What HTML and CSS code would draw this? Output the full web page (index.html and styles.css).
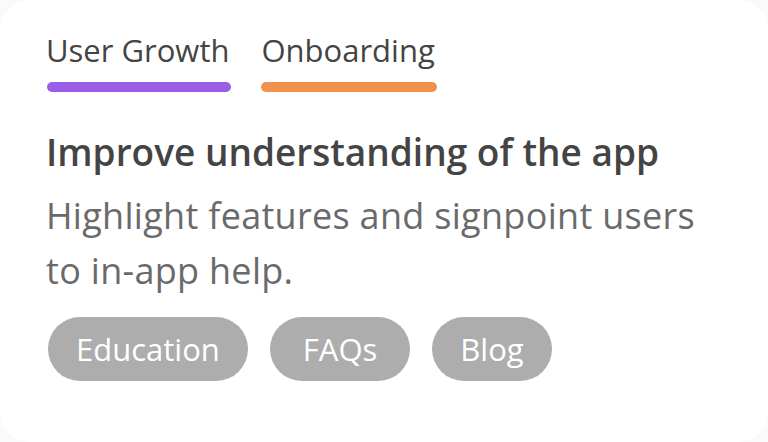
FILE: index.html
```html
<!doctype html>
<html lang="en">
<head>
<meta charset="utf-8">
<title>Improve understanding of the app</title>
<meta name="viewport" content="width=device-width, initial-scale=1">
<link rel="stylesheet" href="styles.css">
</head>
<body>

<div class="card">
  <!-- goal tags -->
  <div class="tags">
    <div class="tag tag-growth">User Growth</div>
    <div class="tag tag-onboard">Onboarding</div>
  </div>

  <h1>Improve understanding of the app</h1>
  <p class="desc">Highlight features and signpoint users to in-app help.</p>

  <ul class="chips">
    <li>Education</li>
    <li class="faq">FAQs</li>
    <li class="blog">Blog</li>
  </ul>
</div>

</body>
</html>
```

FILE: styles.css
```css
:root{
  --c-bg:#fafafa;
  --c-card:#fff;
  --c-text:#444;
  --c-sub:#6a6a6a;
  --c-chip:#adadad;
  --c-purple:#9b5de5;
  --c-orange:#f2914b;
}
*{box-sizing:border-box;margin:0;padding:0;}
html,body{height:100%;}
body{font-family:"Open Sans","Noto Sans",Arial,sans-serif;background:var(--c-bg);color:var(--c-text);}
.card{
    height:100%;
    background:var(--c-card);
    border-radius:30px;
    padding:29px 46px;
}
.tags{display:flex;gap:32px;}
.tag{font-size:31px;line-height:42px;}
.tag::after{
    content:"";
    display:block;
    height:10px;
    border-radius:5px;
    margin:11px -2px 0 1px;
    background:var(--c-purple);
}
.tag-onboard::after{background:var(--c-orange);margin-left:0;}
h1{font-size:37px;font-weight:600;line-height:44px;margin-top:38px;}
.desc{font-size:36px;line-height:55px;letter-spacing:.3px;color:var(--c-sub);margin-top:14px;max-width:680px;}
.chips{list-style:none;display:flex;gap:22px;margin:19px 0 0 2px;}
.chips li{
    background:var(--c-chip);
    color:#fff;
    font-size:31px;
    height:64px;
    line-height:64px;
    padding:0 28px;
    border-radius:32px;
}
.chips li.faq{padding:0 33px;}
.chips li.blog{padding:0 28px;}
```
